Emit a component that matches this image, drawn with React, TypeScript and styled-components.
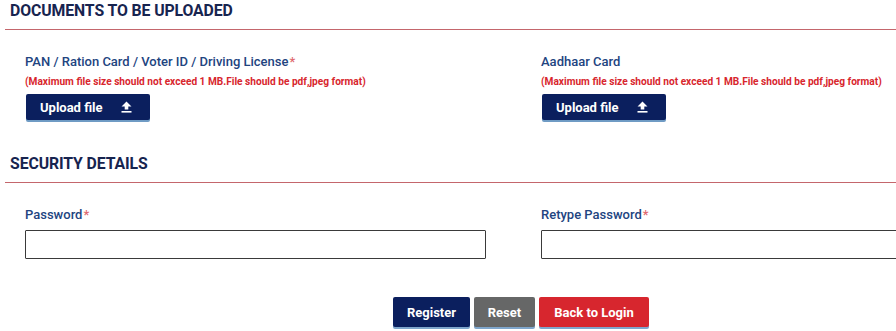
import React from "react";
import styled, { createGlobalStyle } from "styled-components";

const Global = createGlobalStyle`
  html, body { margin: 0; padding: 0; background: #fff; }
  body { font-family: Roboto, "Liberation Sans", Arial, sans-serif; overflow: hidden; width: 896px; }
`;

const Page = styled.div`
  width: 896px;
  height: 331px;
  overflow: hidden;
  position: relative;
`;

const Section = styled.section<{ $gap?: number }>`
  display: flex;
  flex-direction: column;
  margin-top: ${(p) => p.$gap ?? 0}px;
`;

const SectionTitle = styled.h2`
  margin: 0 0 0 5px;
  padding: 2px 0 9px 5px;
  font-size: 15.8px;
  font-weight: 700;
  color: #17244f;
  letter-spacing: -0.1px;
  line-height: 18px;
  border-bottom: 1.5px solid #c4666c;
`;

const Grid = styled.div`
  display: grid;
  grid-template-columns: 516px 516px;
  padding: 24px 0 0 25px;
`;

const Field = styled.div`
  display: flex;
  flex-direction: column;
  align-items: flex-start;
`;

const Label = styled.label`
  font-size: 13px;
  font-weight: 500;
  color: #22447f;
  line-height: 16px;
`;

const Star = styled.span`
  color: #e06a6f;
  margin-left: 1px;
`;

const Note = styled.div`
  font-size: 10.15px;
  font-weight: 700;
  color: #d8262d;
  margin-top: 6px;
  line-height: 12px;
`;

const UploadButton = styled.button`
  margin-top: 6px;
  margin-left: 1px;
  width: 124px;
  height: 26px;
  border: none;
  border-radius: 2px;
  background: #0b1f5e;
  color: #fff;
  font-family: inherit;
  font-size: 13px;
  font-weight: 700;
  display: flex;
  align-items: center;
  gap: 18px;
  padding: 0 0 0 14px;
  box-shadow: 0 2px 0 #6f9bc4;
`;

const Input = styled.input`
  margin-top: 7px;
  width: 461px;
  height: 29px;
  box-sizing: border-box;
  border: 1.5px solid #3a3a3a;
  border-radius: 1px;
  background: #fff;
`;

const Actions = styled.div`
  display: flex;
  justify-content: flex-start;
  gap: 4px;
  padding: 38px 0 0 393px;
`;

const ActionButton = styled.button<{ $bg: string; $w: number }>`
  width: ${(p) => p.$w}px;
  height: 30px;
  border: none;
  border-radius: 2px;
  background: ${(p) => p.$bg};
  color: #fff;
  font-family: inherit;
  font-size: 13px;
  font-weight: 700;
  box-shadow: 0 2px 0 #7fa6cc;
`;

const UploadIcon = () => (
  <svg width="11" height="12" viewBox="0 0 11 12" aria-hidden>
    <path d="M5.5 0.5 L10.5 5.5 H7.3 V8.6 H3.7 V5.5 H0.5 Z" fill="#fff" />
    <rect x="0.5" y="10" width="10" height="1.6" fill="#fff" />
  </svg>
);

export default function App() {
  return (
    <Page>
      <Global />
      <Section>
        <SectionTitle>DOCUMENTS TO BE UPLOADED</SectionTitle>
        <Grid>
          <Field>
            <Label>
              PAN / Ration Card / Voter ID / Driving License<Star>*</Star>
            </Label>
            <Note>(Maximum file size should not exceed 1 MB.File should be pdf,jpeg format)</Note>
            <UploadButton>
              Upload file <UploadIcon />
            </UploadButton>
          </Field>
          <Field>
            <Label>Aadhaar Card</Label>
            <Note>(Maximum file size should not exceed 1 MB.File should be pdf,jpeg format)</Note>
            <UploadButton>
              Upload file <UploadIcon />
            </UploadButton>
          </Field>
        </Grid>
      </Section>
      <Section $gap={33}>
        <SectionTitle>SECURITY DETAILS</SectionTitle>
        <Grid>
          <Field>
            <Label>
              Password<Star>*</Star>
            </Label>
            <Input type="password" />
          </Field>
          <Field>
            <Label>
              Retype Password<Star>*</Star>
            </Label>
            <Input type="password" />
          </Field>
        </Grid>
      </Section>
      <Actions>
        <ActionButton $bg="#0b1f5e" $w={77}>Register</ActionButton>
        <ActionButton $bg="#666767" $w={61}>Reset</ActionButton>
        <ActionButton $bg="#d7262e" $w={110}>Back to Login</ActionButton>
      </Actions>
    </Page>
  );
}
